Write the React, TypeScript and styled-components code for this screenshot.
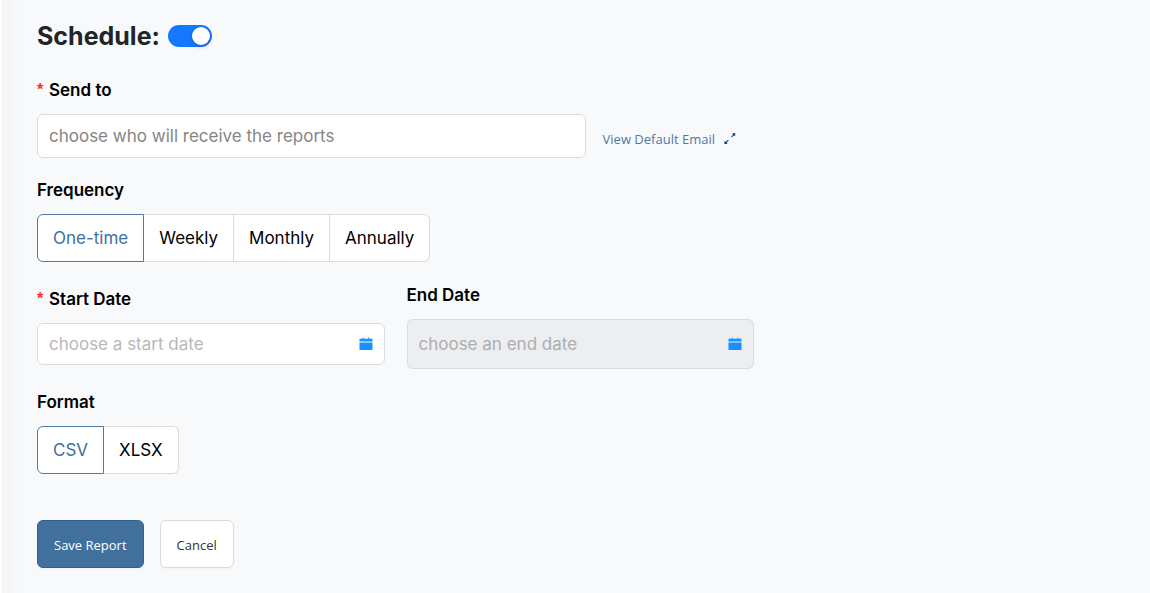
import { useState } from 'react';
import styled, { createGlobalStyle } from 'styled-components';

const sans = `Inter, "Liberation Sans", sans-serif`;
const humanist = `"Open Sans", "Noto Sans", sans-serif`;
const border = '#d9dbdd';
const brand = '#41709c';

const GlobalStyle = createGlobalStyle`
  * { box-sizing: border-box; }
  body {
    margin: 0;
    background: #f8f9fb;
    color: #000;
    font-family: ${sans};
    font-size: 17px;
    line-height: 24px;
  }
  input, button { font: inherit; }
`;

const Page = styled.main`
  min-height: 100vh;
  border-left: 2px solid #fff;
  background: linear-gradient(to right, #f3f4f6, #f8f9fb 18px);
  padding: 20px 35px 24px;
`;

const Form = styled.form`
  display: flex;
  flex-direction: column;
  max-width: 717px;
`;

const TitleRow = styled.label`
  display: flex;
  align-items: center;
  align-self: flex-start;
  gap: 8px;
  margin-bottom: 26px;
`;

const Title = styled.span`
  font-size: 25px;
  line-height: 32px;
  font-weight: 700;
  color: #212529;
`;

const Switch = styled.input`
  appearance: none;
  display: flex;
  align-items: center;
  width: 44px;
  height: 22px;
  margin: 0;
  padding: 2px;
  border-radius: 11px;
  background: #bfbfbf;
  cursor: pointer;

  &::before {
    content: '';
    width: 18px;
    height: 18px;
    border-radius: 50%;
    background: #fff;
    box-shadow: 0 2px 4px rgba(0, 35, 11, 0.2);
  }
  &:checked { background: #1677ff; justify-content: flex-end; }
`;

const Field = styled.div`
  display: flex;
  flex-direction: column;
  gap: 12px;
  flex: 1;
  min-width: 0;
`;

const Label = styled.label<{ $required?: boolean }>`
  display: flex;
  align-items: center;
  font-weight: 600;

  ${(p) => p.$required && `
    &::before {
      content: '*';
      width: 12px;
      color: #ff2a2d;
      font: 700 16px/24px "Liberation Sans", sans-serif;
    }
  `}
`;

const SendSection = styled.div`
  display: flex;
  flex-direction: column;
  gap: 12px;
  margin-bottom: 20px;
`;

const SendRow = styled.div`
  display: flex;
  align-items: center;
  gap: 17px;
`;

const TextInput = styled.input`
  flex: 1;
  min-width: 0;
  height: 44px;
  padding: 0 11px;
  border: 1px solid ${border};
  border-radius: 6px;
  background: #fff;
  font-weight: 400;
  &::placeholder { color: #858585; opacity: 1; }
`;

const EmailLink = styled.a`
  display: flex;
  align-items: center;
  gap: 8px;
  padding: 5px 17px 0 0;
  font-family: ${humanist};
  font-size: 13px;
  color: #4f79a8;
  text-decoration: none;
  white-space: nowrap;
`;

const Group = styled.fieldset`
  margin: 0 0 21px;
  padding: 0;
  border: 0;
  min-width: 0;
`;

const Legend = styled.legend`
  padding: 0;
  margin-bottom: 12px;
  font-weight: 600;
`;

const Segments = styled.div`
  display: flex;
`;

const Segment = styled.label`
  display: flex;
  align-items: center;
  height: 48px;
  padding: 0 15px;
  border: 1px solid ${border};
  border-left-width: 0;
  background: #fff;
  font-weight: 400;
  cursor: pointer;

  &:first-child { border-left-width: 1px; border-radius: 6px 0 0 6px; }
  &:last-child { border-radius: 0 6px 6px 0; }
  &:has(:checked) { color: ${brand}; border-color: #5079a3; }
  &:has(:focus-visible) { outline: 2px solid #9bbce0; }
`;

const Radio = styled.input`
  appearance: none;
  width: 0;
  height: 0;
  margin: 0;
  outline: none;
`;

const Dates = styled.div`
  display: flex;
  align-items: center;
  gap: 22px;
  margin-bottom: 21px;
`;

const DateBox = styled.div<{ $disabled?: boolean }>`
  display: flex;
  align-items: center;
  height: ${(p) => (p.$disabled ? 50 : 42)}px;
  padding: 0 11px;
  border: 1px solid ${border};
  border-radius: 6px;
  background: ${(p) => (p.$disabled ? '#edeef0' : '#fff')};
`;

const DateInput = styled.input`
  flex: 1;
  min-width: 0;
  padding: 0;
  border: 0;
  outline: 0;
  background: transparent;
  font-weight: 400;
  &::placeholder { color: #b8b8b8; opacity: 1; }
  &:disabled::placeholder { color: #acadaf; }
`;

const Actions = styled.div`
  display: flex;
  gap: 16px;
  margin-top: 25px;
`;

const Button = styled.button<{ $primary?: boolean }>`
  height: 48px;
  padding: 2px 16px 0;
  border: 1px solid ${(p) => (p.$primary ? '#2f628f' : border)};
  border-radius: 6px;
  background: ${(p) => (p.$primary ? brand : '#fff')};
  color: ${(p) => (p.$primary ? '#fff' : '#333')};
  box-shadow: 0 2px 0 rgba(0, 0, 0, 0.02);
  font-family: ${humanist};
  font-size: 13px;
  cursor: pointer;
`;

const CalendarIcon = () => (
  <svg width="14" height="14" viewBox="0 0 14 14" aria-hidden="true">
    <path fill="#1890ff" d="M.5 5.5h13v7.5H.5zM.5 1.7h3.2V.6h1v1.1h4.6V.6h1v1.1h3.2v2.8H.5z" />
  </svg>
);

const ExpandIcon = () => (
  <svg width="14" height="14" viewBox="0 0 14 14" aria-hidden="true">
    <path fill="#174a80" d="M9.2 1.2 12.3 1 12.1 4.1 10.9 3.6 8.6 5.6 8 5 10 2.6zM5.1 7.8 5.7 8.4 3.9 10.6 4.4 11.9 1.3 12 1.5 8.9 2.9 9.7z" />
  </svg>
);

type SegmentedProps = { legend: string; name: string; options: string[] };

function Segmented({ legend, name, options }: SegmentedProps) {
  const [value, setValue] = useState(options[0]);
  return (
    <Group>
      <Legend>{legend}</Legend>
      <Segments>
        {options.map((option) => (
          <Segment key={option}>
            <Radio type="radio" name={name} value={option} checked={value === option} onChange={() => setValue(option)} />
            {option}
          </Segment>
        ))}
      </Segments>
    </Group>
  );
}

export default function App() {
  const [enabled, setEnabled] = useState(true);
  return (
    <>
      <GlobalStyle />
      <Page>
        <Form onSubmit={(e) => e.preventDefault()}>
          <TitleRow>
            <Title>Schedule:</Title>
            <Switch type="checkbox" role="switch" checked={enabled} onChange={(e) => setEnabled(e.target.checked)} />
          </TitleRow>

          <SendSection>
            <Label htmlFor="recipients" $required>Send to</Label>
            <SendRow>
              <TextInput id="recipients" placeholder="choose who will receive the reports" />
              <EmailLink href="#default-email">View Default Email<ExpandIcon /></EmailLink>
            </SendRow>
          </SendSection>

          <Segmented legend="Frequency" name="frequency" options={['One-time', 'Weekly', 'Monthly', 'Annually']} />

          <Dates>
            <Field>
              <Label htmlFor="start" $required>Start Date</Label>
              <DateBox>
                <DateInput id="start" placeholder="choose a start date" />
                <CalendarIcon />
              </DateBox>
            </Field>
            <Field>
              <Label htmlFor="end">End Date</Label>
              <DateBox $disabled>
                <DateInput id="end" placeholder="choose an end date" disabled />
                <CalendarIcon />
              </DateBox>
            </Field>
          </Dates>

          <Segmented legend="Format" name="format" options={['CSV', 'XLSX']} />

          <Actions>
            <Button type="submit" $primary>Save Report</Button>
            <Button type="button">Cancel</Button>
          </Actions>
        </Form>
      </Page>
    </>
  );
}
